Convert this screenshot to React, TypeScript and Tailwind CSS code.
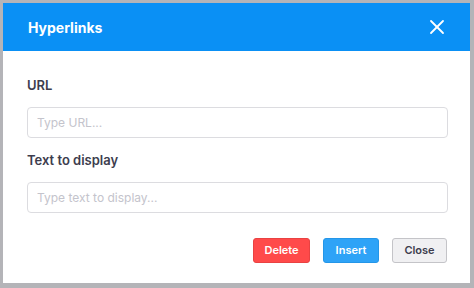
import { X } from 'lucide-react'

function Field({ label, placeholder }: { label: string; placeholder: string }) {
  return (
    <div className="flex flex-col">
      <label className="h-[22px] text-[13px] font-semibold leading-[22px] text-[#3d3d4e]">{label}</label>
      <input
        className="mt-[11px] h-[31px] w-full rounded-[4px] border border-[#dcdce0] bg-white px-[9px] text-[12px] text-[#333] outline-none placeholder:text-[#c4c4cc]"
        placeholder={placeholder}
      />
    </div>
  )
}

export default function App() {
  return (
    <div
      className="flex h-[288px] w-[474px] bg-[#b4b4b8] pb-[5px] pl-[3px] pr-[4px] pt-[3px]"
      style={{ fontFamily: 'Inter, "Noto Sans", sans-serif' }}
    >
      <div className="flex flex-1 flex-col overflow-hidden bg-white">
        <header className="flex h-[48px] items-center justify-between bg-[#0a90f5] pl-[25px] pr-[21px]">
          <h1 className="text-[14px] font-bold text-white">Hyperlinks</h1>
          <X size={24} strokeWidth={1.8} className="text-white" />
        </header>

        <div className="flex flex-1 flex-col pl-[24px] pr-[22px] pt-[23px]">
          <Field label="URL" placeholder="Type URL..." />
          <div className="h-[11px]" />
          <Field label="Text to display" placeholder="Type text to display..." />

          <div className="mt-[25px] flex justify-end gap-[13px] pr-px">
            <button className="h-[25px] w-[57px] rounded-[3px] border border-[#e94242] bg-[#ff4a4a] text-[11px] font-semibold text-white">
              Delete
            </button>
            <button className="h-[25px] w-[56px] rounded-[3px] border border-[#2496e8] bg-[#2ea3f7] text-[11px] font-semibold text-white">
              Insert
            </button>
            <button className="h-[25px] w-[55px] rounded-[3px] border border-[#c4c4c8] bg-[#f0f0f2] text-[11px] font-semibold text-[#3d3d4e]">
              Close
            </button>
          </div>
        </div>
      </div>
    </div>
  )
}
